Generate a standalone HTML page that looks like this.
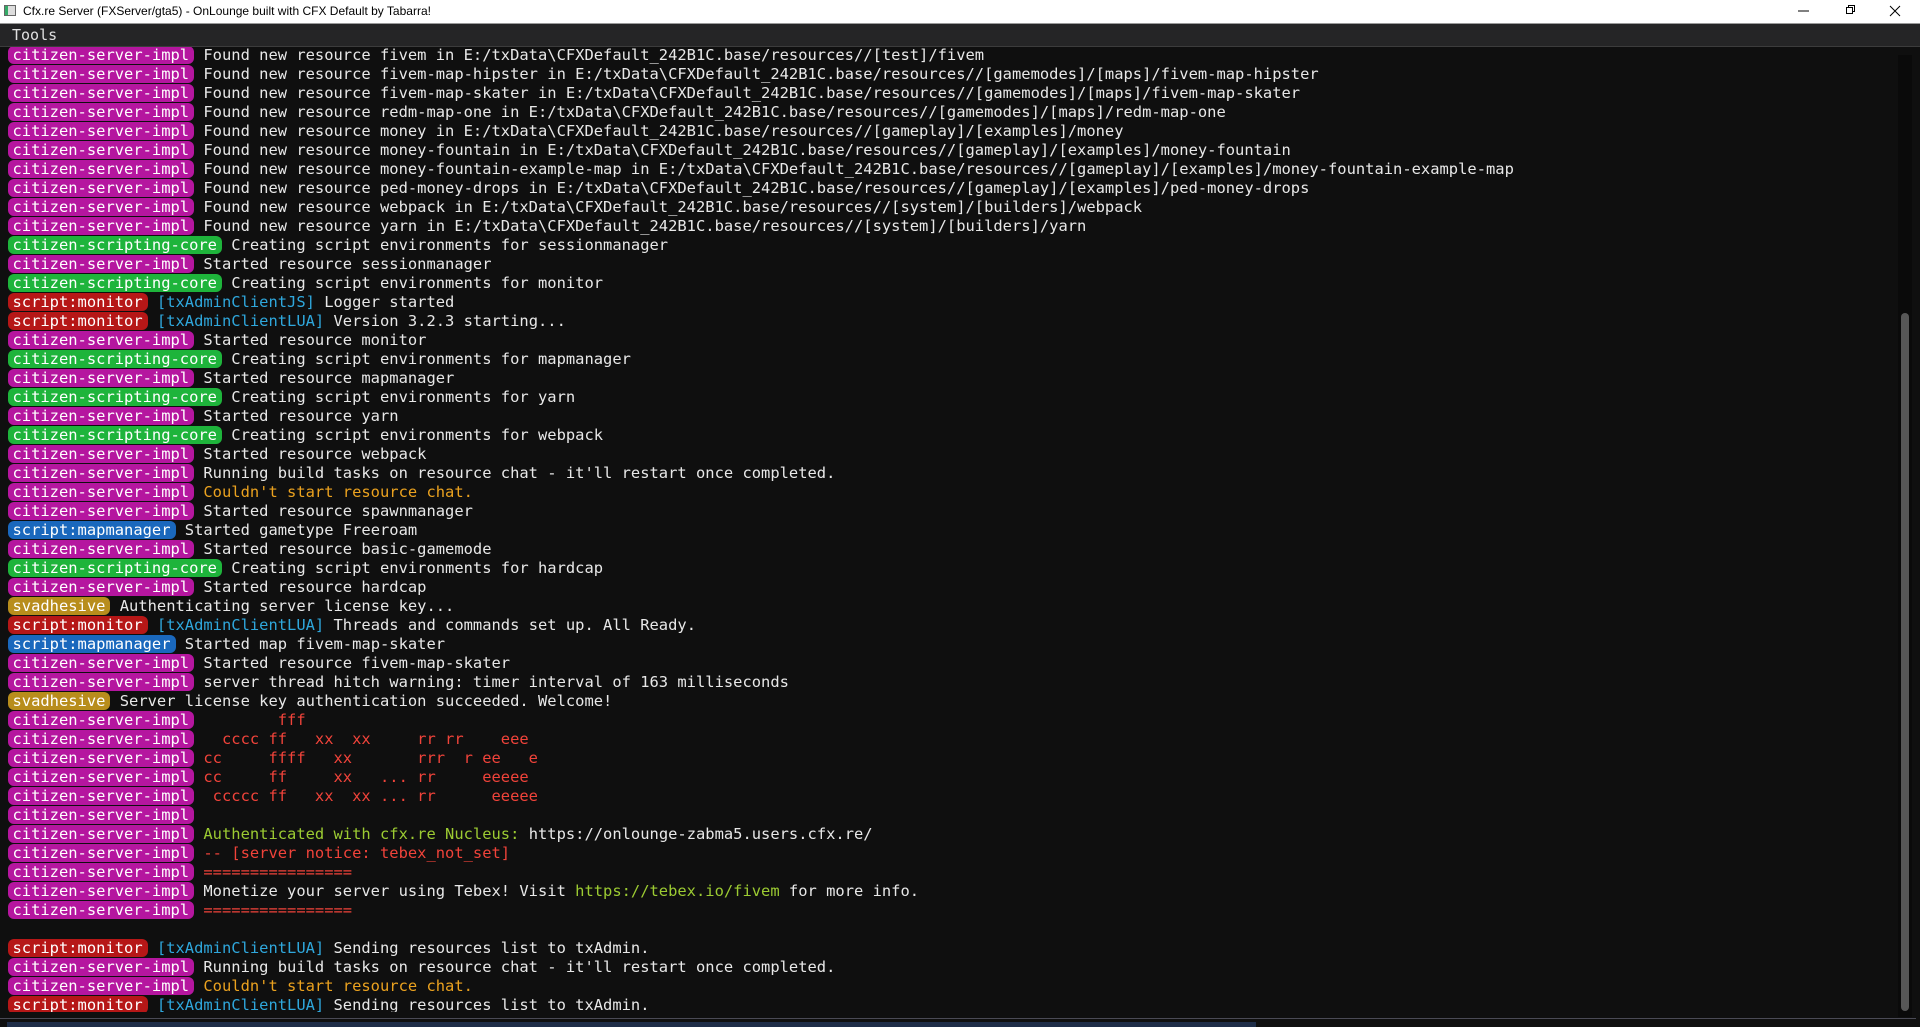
<!DOCTYPE html>
<html><head><meta charset="utf-8">
<style>
*{margin:0;padding:0;box-sizing:border-box}
html,body{width:1920px;height:1027px;overflow:hidden;background:#0f0f0f}
#title{position:absolute;left:0;top:0;width:1920px;height:23px;background:#fff;font-family:"Liberation Sans",sans-serif;font-size:12px;color:#000}
#title .t{position:absolute;left:23px;top:4px}
#title .ic{position:absolute;left:4px;top:5px;width:12px;height:11px;border:1px solid #666;background:linear-gradient(90deg,#3a6 0 3px,#ddd 3px)}
#menu{position:absolute;left:0;top:23px;width:1920px;height:24px;background:#252526;border-top:1px solid #9a9a9a;border-bottom:1px solid #3c3c3c;font-family:"DejaVu Sans Mono",monospace;font-size:15px;color:#e0e0e0}
#menu span{position:absolute;left:12px;top:2px}
#con{position:absolute;left:8px;top:47px;width:1880px;height:965px;overflow:hidden}
#inner{margin-top:-1.5px;font-family:"DejaVu Sans Mono","Liberation Mono",monospace;font-size:15.45px;color:#e8e8e8}
.l{height:19px;line-height:19px;white-space:pre;overflow:hidden}
.g{display:inline-block;height:18px;line-height:18px;padding:0 5px 0 4.5px;border-radius:6px;color:#fff;vertical-align:top;margin-top:0.5px}
.m{background:#b5169f}.c{background:#1eb43b}.r{background:#b61717}.b{background:#1a68bd}.y{background:#b88d1c}
.cy{color:#2fa7dc}.o{color:#eba21f}.gr{color:#9ccb32}.rd{color:#f0433a}
#sb{position:absolute;left:1898px;top:55px;width:14px;height:962px;background:#0a0a0a}
#th{position:absolute;left:1901px;top:313px;width:8px;height:698px;background:#575757;border-radius:4px}
#sep{position:absolute;left:0;top:1018px;width:1916px;height:1px;background:#4a4a55}
#inp{position:absolute;left:7px;top:1022px;width:1249px;height:5px;background:#1e2d48}
</style></head><body>
<div id="title"><div class="ic"></div><span class="t">Cfx.re Server (FXServer/gta5) - OnLounge built with CFX Default by Tabarra!</span>
<svg style="position:absolute;left:1795px;top:4px" width="120" height="14" viewBox="0 0 120 14"><path d="M3 7H14" stroke="#000" stroke-width="1"/><path d="M51.5 3.5h6v6h-6zM53.5 3.5v-2h6v6h-2" fill="none" stroke="#000"/><path d="M95 2l10 10M105 2L95 12" stroke="#000"/></svg></div>
<div id="menu"><span>Tools</span></div>
<div id="con"><div id="inner"><div class="l"><span class="g m">citizen-server-impl</span> Found new resource fivem in E:/txData\CFXDefault_242B1C.base/resources//[test]/fivem</div><div class="l"><span class="g m">citizen-server-impl</span> Found new resource fivem-map-hipster in E:/txData\CFXDefault_242B1C.base/resources//[gamemodes]/[maps]/fivem-map-hipster</div><div class="l"><span class="g m">citizen-server-impl</span> Found new resource fivem-map-skater in E:/txData\CFXDefault_242B1C.base/resources//[gamemodes]/[maps]/fivem-map-skater</div><div class="l"><span class="g m">citizen-server-impl</span> Found new resource redm-map-one in E:/txData\CFXDefault_242B1C.base/resources//[gamemodes]/[maps]/redm-map-one</div><div class="l"><span class="g m">citizen-server-impl</span> Found new resource money in E:/txData\CFXDefault_242B1C.base/resources//[gameplay]/[examples]/money</div><div class="l"><span class="g m">citizen-server-impl</span> Found new resource money-fountain in E:/txData\CFXDefault_242B1C.base/resources//[gameplay]/[examples]/money-fountain</div><div class="l"><span class="g m">citizen-server-impl</span> Found new resource money-fountain-example-map in E:/txData\CFXDefault_242B1C.base/resources//[gameplay]/[examples]/money-fountain-example-map</div><div class="l"><span class="g m">citizen-server-impl</span> Found new resource ped-money-drops in E:/txData\CFXDefault_242B1C.base/resources//[gameplay]/[examples]/ped-money-drops</div><div class="l"><span class="g m">citizen-server-impl</span> Found new resource webpack in E:/txData\CFXDefault_242B1C.base/resources//[system]/[builders]/webpack</div><div class="l"><span class="g m">citizen-server-impl</span> Found new resource yarn in E:/txData\CFXDefault_242B1C.base/resources//[system]/[builders]/yarn</div><div class="l"><span class="g c">citizen-scripting-core</span> Creating script environments for sessionmanager</div><div class="l"><span class="g m">citizen-server-impl</span> Started resource sessionmanager</div><div class="l"><span class="g c">citizen-scripting-core</span> Creating script environments for monitor</div><div class="l"><span class="g r">script:monitor</span> <span class="cy">[txAdminClientJS]</span> Logger started</div><div class="l"><span class="g r">script:monitor</span> <span class="cy">[txAdminClientLUA]</span> Version 3.2.3 starting...</div><div class="l"><span class="g m">citizen-server-impl</span> Started resource monitor</div><div class="l"><span class="g c">citizen-scripting-core</span> Creating script environments for mapmanager</div><div class="l"><span class="g m">citizen-server-impl</span> Started resource mapmanager</div><div class="l"><span class="g c">citizen-scripting-core</span> Creating script environments for yarn</div><div class="l"><span class="g m">citizen-server-impl</span> Started resource yarn</div><div class="l"><span class="g c">citizen-scripting-core</span> Creating script environments for webpack</div><div class="l"><span class="g m">citizen-server-impl</span> Started resource webpack</div><div class="l"><span class="g m">citizen-server-impl</span> Running build tasks on resource chat - it'll restart once completed.</div><div class="l"><span class="g m">citizen-server-impl</span> <span class="o">Couldn't start resource chat.</span></div><div class="l"><span class="g m">citizen-server-impl</span> Started resource spawnmanager</div><div class="l"><span class="g b">script:mapmanager</span> Started gametype Freeroam</div><div class="l"><span class="g m">citizen-server-impl</span> Started resource basic-gamemode</div><div class="l"><span class="g c">citizen-scripting-core</span> Creating script environments for hardcap</div><div class="l"><span class="g m">citizen-server-impl</span> Started resource hardcap</div><div class="l"><span class="g y">svadhesive</span> Authenticating server license key...</div><div class="l"><span class="g r">script:monitor</span> <span class="cy">[txAdminClientLUA]</span> Threads and commands set up. All Ready.</div><div class="l"><span class="g b">script:mapmanager</span> Started map fivem-map-skater</div><div class="l"><span class="g m">citizen-server-impl</span> Started resource fivem-map-skater</div><div class="l"><span class="g m">citizen-server-impl</span> server thread hitch warning: timer interval of 163 milliseconds</div><div class="l"><span class="g y">svadhesive</span> Server license key authentication succeeded. Welcome!</div><div class="l"><span class="g m">citizen-server-impl</span> <span class="rd">        fff</span></div><div class="l"><span class="g m">citizen-server-impl</span> <span class="rd">  cccc ff   xx  xx     rr rr    eee</span></div><div class="l"><span class="g m">citizen-server-impl</span> <span class="rd">cc     ffff   xx       rrr  r ee   e</span></div><div class="l"><span class="g m">citizen-server-impl</span> <span class="rd">cc     ff     xx   ... rr     eeeee</span></div><div class="l"><span class="g m">citizen-server-impl</span> <span class="rd"> ccccc ff   xx  xx ... rr      eeeee</span></div><div class="l"><span class="g m">citizen-server-impl</span></div><div class="l"><span class="g m">citizen-server-impl</span> <span class="gr">Authenticated with cfx.re Nucleus:</span> https://onlounge-zabma5.users.cfx.re/</div><div class="l"><span class="g m">citizen-server-impl</span> <span class="rd">-- [server notice: tebex_not_set]</span></div><div class="l"><span class="g m">citizen-server-impl</span> <span class="rd">================</span></div><div class="l"><span class="g m">citizen-server-impl</span> Monetize your server using Tebex! Visit <span class="gr">https://tebex.io/fivem</span> for more info.</div><div class="l"><span class="g m">citizen-server-impl</span> <span class="rd">================</span></div><div class="l"> </div><div class="l"><span class="g r">script:monitor</span> <span class="cy">[txAdminClientLUA]</span> Sending resources list to txAdmin.</div><div class="l"><span class="g m">citizen-server-impl</span> Running build tasks on resource chat - it'll restart once completed.</div><div class="l"><span class="g m">citizen-server-impl</span> <span class="o">Couldn't start resource chat.</span></div><div class="l"><span class="g r">script:monitor</span> <span class="cy">[txAdminClientLUA]</span> Sending resources list to txAdmin.</div></div></div>
<div id="sb"></div><div id="th"></div>
<div id="sep"></div><div id="inp"></div>
</body></html>
